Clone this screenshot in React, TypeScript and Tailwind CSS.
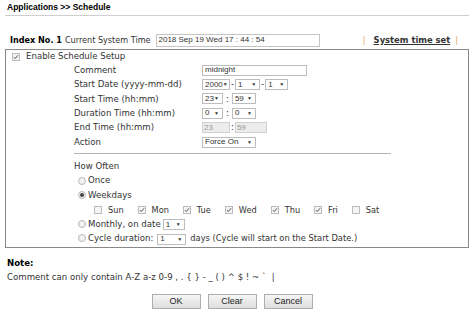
import React from 'react';

const verdana = { fontFamily: '"DejaVu Sans", Verdana, sans-serif' };
const arial = { fontFamily: '"Liberation Sans", Arial, sans-serif' };

function Check({ on = false }: { on?: boolean }) {
  return (
    <span className="inline-flex h-[8px] w-[8px] shrink-0 items-center justify-center border border-[#bcbcbc] bg-[#f4f4f4]">
      {on && (
        <svg viewBox="0 0 8 8" className="h-[6px] w-[6px]">
          <path d="M1.2 4.2 L3 6 L6.8 1.6" fill="none" stroke="#444" strokeWidth="1.2" />
        </svg>
      )}
    </span>
  );
}

function Radio({ on = false }: { on?: boolean }) {
  return (
    <span className="inline-flex h-[8px] w-[8px] shrink-0 items-center justify-center rounded-full border border-[#b8b8b8] bg-[#f2f2f2]">
      {on && <span className="h-[4px] w-[4px] rounded-full bg-[#444]" />}
    </span>
  );
}

function Select({ value, w }: { value: string; w: string }) {
  return (
    <span
      className={`inline-flex h-[11px] items-center justify-between border border-[#bdbdbd] bg-white pl-[2px] pr-[3px] text-[8px] leading-none text-[#333] ${w}`}
      style={arial}
    >
      <span>{value}</span>
      <span className="text-[5px]">▼</span>
    </span>
  );
}

function Row({ label, children }: { label: string; children: React.ReactNode }) {
  return (
    <div className="flex h-[14.4px] items-center">
      <span className="w-[128px] text-[#333]">{label}</span>
      <div className="flex items-center">{children}</div>
    </div>
  );
}

export default function App() {
  const days = [
    { d: 'Sun', on: false },
    { d: 'Mon', on: true },
    { d: 'Tue', on: true },
    { d: 'Wed', on: true },
    { d: 'Thu', on: true },
    { d: 'Fri', on: true },
    { d: 'Sat', on: false },
  ];

  return (
    <div className="h-[318px] w-[474px] overflow-hidden bg-white text-[8.6px] text-[#222]" style={verdana}>
      {/* Header */}
      <div className="mx-[5px] flex h-[16px] items-center border-b border-[#cfcfcf] pl-[2px] text-[8.5px] font-bold text-black" style={arial}>
        Applications &gt;&gt; Schedule
      </div>

      {/* Index row */}
      <div className="mt-[17px] flex h-[14px] items-center pl-[10px] pr-[16px] text-[8.1px]">
        <span className="font-bold text-black">Index No. 1</span>
        <span className="ml-[3px] text-[#333]">Current System Time</span>
        <span className="ml-[5px] flex h-[13px] w-[164px] items-center border border-[#c4c4c4] pl-[2px] text-[8px] text-[#333]" style={arial}>
          2018 Sep 19 Wed 17 : 44 : 54
        </span>
        <span className="ml-auto text-[#d9a65a]">|</span>
        <span className="ml-[8px] text-[8.4px] font-bold text-[#333] underline">System time set</span>
        <span className="ml-[5px] text-[#d9a65a]">|</span>
      </div>

      {/* Main box */}
      <div className="mx-[5px] mt-[2px] h-[199px] border border-[#888]">
        <div className="flex h-[13px] items-center pl-[6px]">
          <Check on />
          <span className="ml-[6px] text-[#333]">Enable Schedule Setup</span>
        </div>

        <div className="pl-[68px]">
          <Row label="Comment">
            <span className="flex h-[11px] w-[105px] items-center border border-[#bdbdbd] pl-[2px] text-[8px] text-[#333]" style={arial}>
              midnight
            </span>
          </Row>
          <Row label="Start Date (yyyy-mm-dd)">
            <Select value="2000" w="w-[28px]" />
            <span className="mx-[1px] text-[#333]">-</span>
            <Select value="1" w="w-[25px]" />
            <span className="mx-[1px] text-[#333]">-</span>
            <Select value="1" w="w-[23px]" />
          </Row>
          <Row label="Start Time (hh:mm)">
            <Select value="23" w="w-[21px]" />
            <span className="mx-[3px] text-[#333]">:</span>
            <Select value="59" w="w-[24px]" />
          </Row>
          <Row label="Duration Time (hh:mm)">
            <Select value="0" w="w-[21px]" />
            <span className="mx-[3px] text-[#333]">:</span>
            <Select value="0" w="w-[24px]" />
          </Row>
          <Row label="End Time (hh:mm)">
            <span className="flex h-[11px] w-[28px] items-center border border-[#d0d0d0] bg-[#ececec] pl-[1px] text-[8px] text-[#999]" style={arial}>
              23
            </span>
            <span className="mx-[1px] text-[#333]">:</span>
            <span className="flex h-[11px] w-[32px] items-center border border-[#d0d0d0] bg-[#ececec] pl-[1px] text-[8px] text-[#999]" style={arial}>
              59
            </span>
          </Row>
          <Row label="Action">
            <Select value="Force On" w="w-[54px]" />
          </Row>

          <div className="mt-[4px] w-[317px] border-t border-[#b5b5b5]" />

          <div className="mt-[5px] flex h-[14.4px] items-center text-[#333]">How Often</div>
          <div className="flex h-[14.4px] items-center pl-[4px] text-[#333]">
            <Radio />
            <span className="ml-[2px]">Once</span>
          </div>
          <div className="flex h-[14.4px] items-center pl-[4px] text-[#333]">
            <Radio on />
            <span className="ml-[2px]">Weekdays</span>
          </div>
          <div className="flex h-[14.4px] items-center gap-[14px] pl-[20px] text-[8.2px] text-[#333]">
            {days.map((x) => (
              <span key={x.d} className="flex items-center gap-[6px]">
                <Check on={x.on} />
                <span>{x.d}</span>
              </span>
            ))}
          </div>
          <div className="flex h-[14.4px] items-center pl-[4px] text-[#333]">
            <Radio />
            <span className="ml-[2px]">Monthly, on date</span>
            <span className="ml-[2px]">
              <Select value="1" w="w-[22px]" />
            </span>
          </div>
          <div className="flex h-[14.4px] items-center pl-[4px] text-[#333]">
            <Radio />
            <span className="ml-[2px]">Cycle duration:</span>
            <span className="ml-[4px]">
              <Select value="1" w="w-[29px]" />
            </span>
            <span className="ml-[4px] text-[8.3px]">days (Cycle will start on the Start Date.)</span>
          </div>
        </div>
      </div>

      {/* Note */}
      <div className="mt-[9px] pl-[7px]">
        <div className="h-[14px] font-bold text-black">Note:</div>
        <div className="h-[14px] text-[#333]">Comment can only contain A-Z a-z 0-9 , . {'{'} {'}'} - _ ( ) ^ $ ! ~ ` &nbsp;|</div>
      </div>

      {/* Buttons */}
      <div className="mt-[9px] flex justify-center gap-[7px] pr-[10px]" style={arial}>
        {['OK', 'Clear', 'Cancel'].map((b) => (
          <button
            key={b}
            className="h-[15px] w-[49px] border border-[#adadad] bg-gradient-to-b from-[#f6f6f6] to-[#dddddd] text-[9px] leading-none text-[#222]"
          >
            {b}
          </button>
        ))}
      </div>
    </div>
  );
}
